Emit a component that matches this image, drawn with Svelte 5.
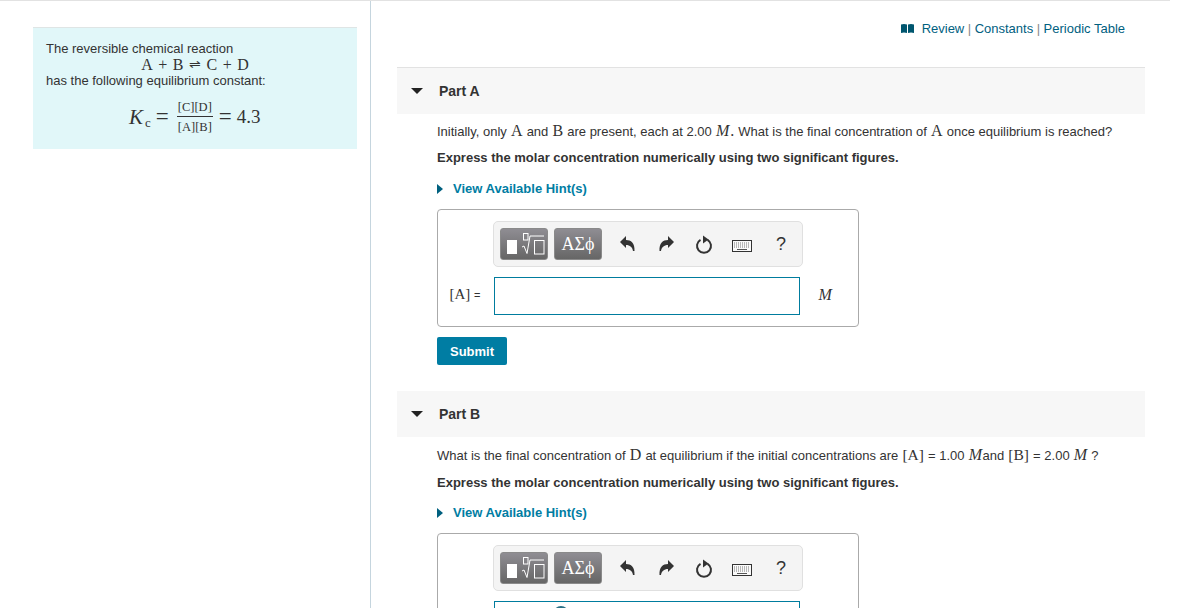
<script>
  const links = ["Review", "Constants", "Periodic Table"];
  const note = "Express the molar concentration numerically using two significant figures.";
</script>

{#snippet toolbar()}
  <div class="toolbar">
    <button class="tpl" aria-label="templates">
      <svg width="46" height="30" viewBox="1 1 46 30">
        <rect x="7" y="12" width="10" height="14" fill="#fff" />
        <g fill="none" stroke="#fff" stroke-width="1">
          <rect x="23.5" y="5.5" width="4.500" height="6.500" />
          <path d="M22 19l2-1 3 7.500 3-17.500h14" />
          <rect x="34.500" y="12.500" width="9.500" height="13.500" />
        </g>
      </svg>
    </button>
    <button class="tpl greek">ΑΣϕ</button>
    <div class="tools">
      <svg width="16" height="16" viewBox="0 0 16 16" fill="#333">
        <path d="M0 6l6-6v4c5 0 9 3 8.500 11h-1.500c-.500-3.500-3-6-7-6v3z" />
      </svg>
      <svg class="redo" width="16" height="16" viewBox="0 0 16 16" fill="#333">
        <path d="M16 6l-6-6v4c-5 0-9 3-8.500 11h1.500c.500-3.500 3-6 7-6v3z" />
      </svg>
      <svg class="reset" width="18" height="19" viewBox="0 0 18 19">
        <path d="M5.500 4.800a7 7 0 1 0 7 0" fill="none" stroke="#333" stroke-width="2" />
        <path d="M8 0.500l5.500 4-5.500 4z" fill="#333" />
      </svg>
      <svg class="keys" width="20" height="12" viewBox="0 0 20 12">
        <rect x="0.500" y="0.500" width="19" height="11" fill="#fafafa" stroke="#333" />
        <path d="M2 3h16M2 5h16" stroke="#777" stroke-dasharray="1 1" />
        <path d="M2 7h16" stroke="#777" stroke-dasharray="1 1" />
        <path d="M5 9.500h10" stroke="#555" />
      </svg>
      <span class="help">?</span>
    </div>
  </div>
{/snippet}

{#snippet hint()}
  <div class="hint">
    <svg width="6" height="10" viewBox="0 0 6 10"><path d="M0 0l6 5-6 5z" fill="#00607f" /></svg>
    <span>View Available Hint(s)</span>
  </div>
{/snippet}

{#snippet head(title)}
  <div class="part-head">
    <svg width="12" height="6" viewBox="0 0 12 6"><path d="M0 0h12l-6 6z" fill="#222" /></svg>
    <span>{title}</span>
  </div>
{/snippet}

<div class="page">
  <aside>
    <div class="intro">
      <p>The reversible chemical reaction</p>
      <div class="rxn"><span>A</span><i>+</i><span>B</span><b>⇌</b><span>C</span><i>+</i><span>D</span></div>
      <p>has the following equilibrium constant:</p>
      <div class="formula">
        <em>K</em><sub>c</sub><span class="eq">=</span>
        <span class="frac"><span>[C][D]</span><span class="den">[A][B]</span></span>
        <span class="eq second-eq">=</span><span>4.3</span>
      </div>
    </div>
  </aside>

  <main>
    <nav>
      <svg width="13" height="9" viewBox="0 0 13 9">
        <path d="M0 0.500q3-1 6 0v8.500q-3-1-6 0zM7 0.500q3-1 6 0v8.500q-3-1-6 0z" fill="#00566f" />
      </svg>
      {#each links as l, i}
        {#if i > 0}<span class="sep">|</span>{/if}
        <a href="#top">{l}</a>
      {/each}
    </nav>

    <section class="first">
      {@render head("Part A")}
      <div class="body">
        <p class="q">
          Initially, only <span class="m">A</span> and <span class="m">B</span> are present, each at 2.00
          <em class="m">M</em><span class="m">.</span> What is the final concentration of <span class="m">A</span> once equilibrium is reached?
        </p>
        <p class="note">{note}</p>
        {@render hint()}
        <div class="answer">
          {@render toolbar()}
          <div class="row">
            <span class="lbl"><span class="m">[A]</span> =</span>
            <div class="input"></div>
            <em class="m unit">M</em>
          </div>
        </div>
        <button class="submit">Submit</button>
      </div>
    </section>

    <section class="second">
      {@render head("Part B")}
      <div class="body">
        <p class="q tight">
          What is the final concentration of <span class="m">D</span> at equilibrium if the initial concentrations are
          <span class="m big">[A]</span> = 1.00 <em class="m">M</em>and <span class="m big">[B]</span> = 2.00 <em class="m">M</em> ?
        </p>
        <p class="note">{note}</p>
        {@render hint()}
        <div class="answer">
          {@render toolbar()}
          <div class="row">
            <span class="lbl"></span>
            <div class="input"><span class="spin"></span></div>
          </div>
        </div>
      </div>
    </section>
  </main>
</div>

<style>
  :global(body) {
    margin: 0;
    background: #fff;
    overflow: hidden;
  }
  .page {
    width: 1170px;
    height: 608px;
    overflow: hidden;
    border-top: 1px solid #e2e2e2;
    box-sizing: border-box;
    display: flex;
    font-family: "Liberation Sans", Arial, sans-serif;
    font-size: 13px;
    color: #333;
  }
  p {
    margin: 0;
  }
  aside {
    width: 370px;
    box-sizing: content-box;
    border-right: 1px solid #c5d5de;
    padding-top: 26px;
    flex: none;
  }
  .intro {
    margin-left: 33px;
    width: 324px;
    height: 122px;
    box-sizing: border-box;
    background: #e1f7f9;
    border-top: 1px solid #dfe5e5;
    padding: 13px 13px 0;
    line-height: 16px;
  }
  .rxn {
    font-family: "Liberation Serif", serif;
    font-size: 16px;
    line-height: 16px;
    display: flex;
    justify-content: center;
    gap: 5.500px;
  }
  .rxn i {
    font-style: normal;
  }
  .rxn b {
    font-weight: normal;
    font-size: 14px;
  }
  .formula {
    font-family: "Liberation Serif", serif;
    font-size: 19px;
    display: flex;
    align-items: center;
    margin: 11px 0 0 83px;
    height: 34px;
  }
  .formula em {
    font-size: 21px;
  }
  .formula sub {
    font-size: 13px;
    line-height: 1;
    align-self: flex-end;
    margin: 0 0 5px 2px;
  }
  .eq {
    font-size: 23px;
    margin: 0 8px 0 5px;
  }
  .second-eq {
    margin: 0 5px 0 6px;
  }
  .frac {
    display: flex;
    flex-direction: column;
    font-size: 12.500px;
    line-height: 17px;
    text-align: center;
    padding: 2px 0;
  }
  .den {
    border-top: 1px solid #333;
    padding: 2px 1px 0;
  }
  main {
    flex: 1;
    padding: 0 25px 0 26px;
    min-width: 0;
  }
  nav {
    height: 66px;
    padding: 20px 20px 0 0;
    box-sizing: border-box;
    display: flex;
    justify-content: flex-end;
    align-items: flex-start;
    gap: 3.500px;
    line-height: 15px;
    color: #888;
  }
  nav svg {
    margin: 3px 4px 0 0;
  }
  nav a {
    color: #00607f;
    text-decoration: none;
  }
  .part-head {
    height: 46px;
    background: #f7f7f7;
    display: flex;
    align-items: center;
    font-weight: bold;
    font-size: 14px;
    color: #333;
    padding-left: 14px;
    gap: 16px;
  }
  .first .part-head {
    border-top: 1px solid #e2e2e2;
  }
  .second {
    margin-top: 26px;
  }
  .body {
    padding: 0 0 0 40px;
  }
  .q {
    margin-top: 8px;
    line-height: 17px;
    white-space: nowrap;
  }
  .q.tight {
    margin-top: 9px;
    line-height: 18px;
  }
  .m {
    font-family: "Liberation Serif", serif;
    font-size: 16px;
    padding: 0 0.500px;
  }
  .big {
    font-size: 15.500px;
  }
  .note {
    margin-top: 10px;
    font-weight: bold;
    line-height: 16px;
  }
  .hint {
    margin-top: 15px;
    display: flex;
    align-items: center;
    gap: 10px;
    line-height: 16px;
    font-weight: bold;
    color: #007da3;
  }
  .second .hint {
    margin-top: 14px;
  }
  .answer {
    margin-top: 12px;
    width: 422px;
    box-sizing: border-box;
    border: 1px solid #aaa;
    border-radius: 4px;
    height: 118px;
    padding: 11px 0 0 55px;
  }
  .toolbar {
    width: 310px;
    height: 46px;
    box-sizing: border-box;
    background: #f4f4f4;
    border: 1px solid #e0e0e0;
    border-radius: 5px;
    display: flex;
    align-items: center;
    padding-left: 6px;
    gap: 6px;
  }
  .tpl {
    width: 48px;
    height: 32px;
    padding: 0;
    box-sizing: border-box;
    border: 1px solid #8a8a8a;
    border-radius: 3px;
    background: linear-gradient(#8f8d93, #666);
    display: flex;
    align-items: center;
    justify-content: center;
  }
  .greek {
    font-family: "Liberation Serif", serif;
    font-size: 18px;
    color: #fff;
  }
  .tools {
    flex: 1;
    display: flex;
    align-items: center;
    padding-left: 12px;
  }
  .redo {
    margin-left: 22px;
  }
  .reset {
    margin-left: 21px;
  }
  .keys {
    margin-left: 19px;
    margin-top: 3px;
  }
  .help {
    margin-left: 24px;
    font-size: 18px;
    color: #333;
  }
  .row {
    display: flex;
    align-items: center;
    margin-top: 10px;
    margin-left: -44px;
  }
  .lbl {
    width: 45px;
    flex: none;
    font-size: 11px;
    white-space: nowrap;
    padding-bottom: 4px;
  }
  .lbl .m {
    font-size: 15px;
  }
  .input {
    width: 306px;
    height: 38px;
    box-sizing: border-box;
    border: 1px solid #007c9e;
    background: #fff;
    position: relative;
    flex: none;
    overflow: hidden;
  }
  .spin {
    position: absolute;
    left: 58px;
    top: 4px;
    width: 16px;
    height: 16px;
    border: 2px solid #2a6f85;
    border-radius: 50%;
    box-sizing: border-box;
  }
  .unit {
    margin-left: 18px;
    font-size: 16px;
    padding-bottom: 2px;
  }
  .submit {
    display: block;
    margin-top: 10px;
    width: 70px;
    height: 28px;
    padding: 0;
    border: 0;
    border-radius: 2px;
    background: #007da3;
    color: #fff;
    font: bold 13px "Liberation Sans", Arial, sans-serif;
  }
</style>
